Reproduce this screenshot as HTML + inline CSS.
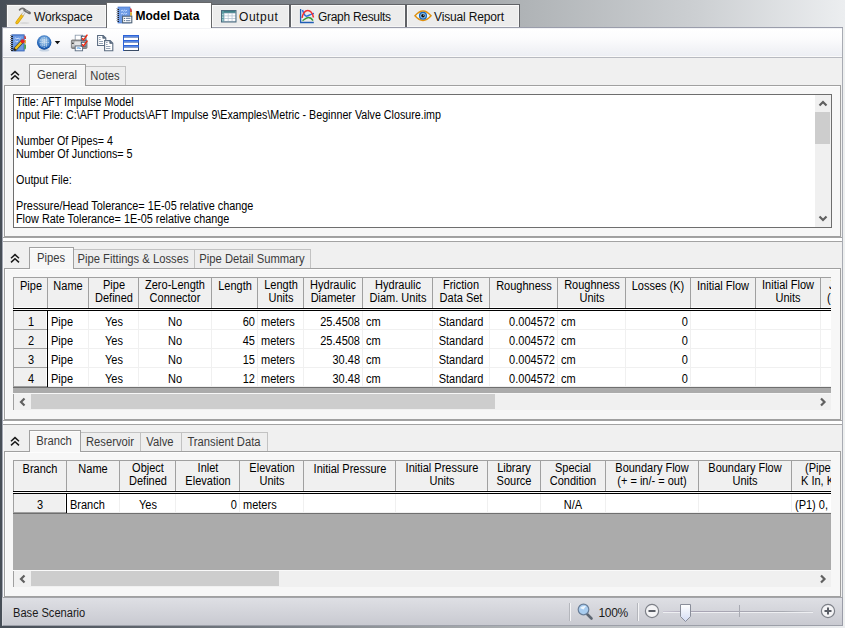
<!DOCTYPE html>
<html><head><meta charset="utf-8">
<style>
*{margin:0;padding:0;box-sizing:border-box}
html,body{width:845px;height:628px;overflow:hidden;background:#f0f0f0;font-family:"Liberation Sans",sans-serif;font-size:11px;color:#000}
.a{position:absolute}
.t{white-space:pre}
svg{position:absolute;overflow:visible}
</style></head><body>
<div class="a" style="left:0px;top:0px;width:845px;height:27px;background:linear-gradient(to right,#474e57 0%,#5a6068 13%,#6e747b 25%,#7e848b 35%,#979b9f 48%,#aeb2b5 61%,#cdd0d3 83%,#eceef0 100%)"></div>
<div class="a" style="left:0px;top:626px;width:845px;height:2px;background:linear-gradient(to right,#474e57 0%,#5a6068 13%,#6e747b 25%,#7e848b 35%,#979b9f 48%,#aeb2b5 61%,#cdd0d3 83%,#eceef0 100%)"></div>
<div class="a" style="left:0px;top:0px;width:2px;height:628px;background:#474e57"></div>
<div class="a" style="left:843px;top:27px;width:2px;height:599px;background:#eef0f0"></div>
<div class="a" style="left:6px;top:4px;width:101px;height:23px;background:#ececec;border:1px solid #606266;border-bottom:none;box-shadow:inset 1px 1px 0 #fafafa,inset -1px -1px 0 #f6f6f6"></div>
<div class="a" style="left:211px;top:4px;width:79px;height:23px;background:#ececec;border:1px solid #606266;border-bottom:none;box-shadow:inset 1px 1px 0 #fafafa,inset -1px -1px 0 #f6f6f6"></div>
<div class="a" style="left:290px;top:4px;width:116px;height:23px;background:#ececec;border:1px solid #606266;border-bottom:none;box-shadow:inset 1px 1px 0 #fafafa,inset -1px -1px 0 #f6f6f6"></div>
<div class="a" style="left:406px;top:4px;width:114px;height:23px;background:#ececec;border:1px solid #606266;border-bottom:none;box-shadow:inset 1px 1px 0 #fafafa,inset -1px -1px 0 #f6f6f6"></div>
<div class="a" style="left:106px;top:2px;width:106px;height:26px;background:#fff;border:1px solid #666769;border-bottom:none;z-index:1"></div>
<div class="a t" style="left:34px;top:10.84px;font-size:12px;line-height:12px;letter-spacing:-0.15px;color:#111">Workspace</div>
<div class="a t" style="left:135.5px;top:9.84px;font-size:12px;line-height:12px;font-weight:bold;z-index:2">Model Data</div>
<div class="a t" style="left:239px;top:10.84px;font-size:12px;line-height:12px;letter-spacing:0.55px;color:#111">Output</div>
<div class="a t" style="left:318px;top:10.84px;font-size:12px;line-height:12px;letter-spacing:-0.3px;color:#111">Graph Results</div>
<div class="a t" style="left:434px;top:10.84px;font-size:12px;line-height:12px;letter-spacing:-0.15px;color:#111">Visual Report</div>
<svg style="left:12px;top:6px;z-index:2" width="20" height="20" viewBox="0 0 20 20">
<ellipse cx="12.5" cy="17" rx="5" ry="0.8" fill="#d2d2d2"/>
<path d="M5 16.6 L10.6 8.9" stroke="#c89200" stroke-width="3.2" stroke-linecap="round"/>
<path d="M5 16.6 L10.6 8.9" stroke="#f2bd18" stroke-width="2.2" stroke-linecap="round"/>
<path d="M10.3 9.3 L13 5.4" stroke="#b8b8b8" stroke-width="2.4"/>
<path d="M10.5 8.8 L12.9 5.5" stroke="#f4f4f4" stroke-width="1.2"/>
<path d="M7.6 3.8 Q10 1.2 13 3.6" stroke="#727272" stroke-width="1.7" fill="none" stroke-linecap="round"/>
<path d="M12.6 4.2 L17.6 7" stroke="#6a6a6a" stroke-width="2.6" stroke-linecap="round"/>
<path d="M13.4 4.2 L16.8 6.1" stroke="#b4b4b4" stroke-width="0.8"/>
</svg>
<svg style="left:115px;top:6px;z-index:2" width="18" height="18" viewBox="0 0 18 18">
<rect x="3" y="1" width="12" height="16" fill="#6c9ae6" stroke="#4a78cc" stroke-width="0.7"/>
<path d="M6 5.2 l1.2 -1 l1.2 1 l1.2 -1 l1.2 1 l1.2 -1 M6 8.2 l1.2 -1 l1.2 1 l1.2 -1 l1.2 1 l1.2 -1" stroke="#d6e6ff" stroke-width="0.9" fill="none"/>
<path d="M1.5 2.5 h1 M1.5 4.5 h1 M1.5 6.5 h1 M1.5 8.5 h1 M1.5 10.5 h1 M1.5 12.5 h1 M1.5 14.5 h1" stroke="#8a8f96" stroke-width="1"/>
<path d="M2.5 3.5 h1.5 M2.5 5.5 h1.5 M2.5 7.5 h1.5 M2.5 9.5 h1.5 M2.5 11.5 h1.5 M2.5 13.5 h1.5 M2.5 15.5 h1.5" stroke="#1e1e1e" stroke-width="1"/>
<path d="M15 2 q2 0 2 2.5 v1.5 h-2 z" fill="#c94848"/><rect x="15" y="6.2" width="2" height="3.6" fill="#e0b440"/>
<rect x="7.6" y="10.2" width="9.2" height="6.6" fill="#fff" stroke="#4f6378" stroke-width="1.1"/>
<path d="M10.8 12.4 h4.6 M10.8 14.6 h4.6" stroke="#8094b0" stroke-width="1.1"/>
<circle cx="9.4" cy="12.4" r="0.6" fill="#4f6378"/><circle cx="9.4" cy="14.6" r="0.6" fill="#4f6378"/>
</svg>
<svg style="left:221px;top:10px;z-index:2" width="16" height="13" viewBox="0 0 16 13">
<rect x="0.5" y="0.5" width="14.5" height="11.5" fill="#b4c3d2" stroke="#4b6b7e" stroke-width="1"/>
<rect x="1" y="1" width="13.5" height="1.8" fill="#3f8088"/>
<rect x="1" y="1" width="1.8" height="10.5" fill="#5a9aa2"/>
<rect x="3.6" y="3.6" width="3.2" height="1.9" fill="#fff"/><rect x="7.5" y="3.6" width="3.2" height="1.9" fill="#fff"/><rect x="11.4" y="3.6" width="2.8" height="1.9" fill="#fff"/>
<rect x="3.6" y="6.3" width="3.2" height="1.9" fill="#fff"/><rect x="7.5" y="6.3" width="3.2" height="1.9" fill="#fff"/><rect x="11.4" y="6.3" width="2.8" height="1.9" fill="#fff"/>
<rect x="3.6" y="9" width="3.2" height="1.9" fill="#fff"/><rect x="7.5" y="9" width="3.2" height="1.9" fill="#fff"/><rect x="11.4" y="9" width="2.8" height="1.9" fill="#fff"/>
<rect x="1.2" y="3.8" width="1.2" height="1.5" fill="#bfe0e2"/><rect x="1.2" y="6.5" width="1.2" height="1.5" fill="#bfe0e2"/><rect x="1.2" y="9.2" width="1.2" height="1.5" fill="#bfe0e2"/>
</svg>
<svg style="left:299px;top:8px;z-index:2" width="16" height="16" viewBox="0 0 16 16">
<path d="M3.5 12.6 C5 12 7 9.5 9.5 9.5 C11.5 9.5 13 11 14 12.6" stroke="#3b9a35" stroke-width="1.5" fill="none"/>
<path d="M3.5 2.1 C4.5 5 5.5 8.2 7.5 8.2 C10 8.2 12 5.5 15 5.5" stroke="#2a6fe0" stroke-width="1.5" fill="none"/>
<path d="M3 9.8 C4 5 6 2.5 8.8 2.5 C11.5 2.5 13.5 5 14.5 9.5" stroke="#f03030" stroke-width="1.5" fill="none"/>
<path d="M1.6 1 V14.5 H14.8" stroke="#1f5db5" stroke-width="1.3" fill="none"/>
</svg>
<svg style="left:414px;top:9px;z-index:2" width="18" height="14" viewBox="0 0 18 14">
<path d="M1 6.8 Q9 -3 17 6.8 Q9 16 1 6.8 Z" fill="#e8f8ff" stroke="#e0900e" stroke-width="1.5"/>
<circle cx="9" cy="6.7" r="3.4" fill="#8fc6ee" stroke="#1e66b8" stroke-width="1.3"/>
<circle cx="9" cy="6.7" r="1.8" fill="#111"/>
<circle cx="9.6" cy="6.1" r="0.6" fill="#cfcfcf"/>
</svg>
<div class="a" style="left:2px;top:27px;width:1px;height:572px;background:#a2a6b2"></div>
<div class="a" style="left:3px;top:28px;width:1px;height:571px;background:#f8f8f8"></div>
<div class="a" style="left:842px;top:27px;width:1px;height:572px;background:#a8abb3"></div>
<div class="a" style="left:3px;top:28px;width:839px;height:29px;background:linear-gradient(#ffffff 0%,#fcfcfd 35%,#f3f4f7 70%,#eceef3 100%)"></div>
<div class="a" style="left:2px;top:27px;width:841px;height:1px;background:#9a9dab"></div>
<div class="a" style="left:107px;top:27px;width:104px;height:1px;background:#ffffff;z-index:1"></div>
<div class="a" style="left:3px;top:28px;width:839px;height:1px;background:#f2f3f6"></div>
<div class="a" style="left:3px;top:56px;width:839px;height:1px;background:#fafafa"></div>
<div class="a" style="left:3px;top:57px;width:839px;height:1px;background:#b8bac0"></div>
<svg style="left:9px;top:34px" width="18" height="18" viewBox="0 0 18 18">
<rect x="2.8" y="0.8" width="12.4" height="16.2" fill="#5b8ad8" stroke="#3a66b8" stroke-width="0.8"/>
<rect x="4" y="2" width="10" height="14" fill="#6d9ae2"/>
<path d="M5.5 5 l1.2 -1 l1.2 1 l1.2 -1 l1.2 1 l1.2 -1 M5.5 8 l1.2 -1 l1.2 1 l1.2 -1" stroke="#d8e6ff" stroke-width="0.9" fill="none"/>
<path d="M2 2.5 h2 M2 4.5 h2 M2 6.5 h2 M2 8.5 h2 M2 10.5 h2 M2 12.5 h2 M2 14.5 h2 M2 16.5 h2" stroke="#1a1a1a" stroke-width="0.9"/>
<path d="M1 1.5 h1.5 M1 3.5 h1.5 M1 5.5 h1.5 M1 7.5 h1.5 M1 9.5 h1.5 M1 11.5 h1.5 M1 13.5 h1.5 M1 15.5 h1.5" stroke="#8a8f96" stroke-width="0.9"/>
<path d="M15.2 1.5 q1.8 0 1.8 2 v1.5 h-1.8 z" fill="#c84040"/><path d="M15.2 6 h1.8 v3.5 h-1.8 z" fill="#dcb040"/><path d="M15.2 10.5 h1.8 v3.5 q0 1.5 -1.8 1.5 z" fill="#50a050"/>
<path d="M6 15.2 L13 7.8" stroke="#3a3a3a" stroke-width="3.8" stroke-linecap="round"/>
<path d="M6.3 14.9 L13 7.8" stroke="#f1c319" stroke-width="2.4"/>
<path d="M4.6 16.6 l1 -2.4 l1.4 1.4 z" fill="#222"/>
<circle cx="13.6" cy="7.2" r="2" fill="#e42222"/>
</svg>
<svg style="left:36px;top:34px" width="26" height="18" viewBox="0 0 26 18">
<defs><radialGradient id="gl" cx="0.5" cy="0.4" r="0.62"><stop offset="0" stop-color="#b9d3ea"/><stop offset="0.45" stop-color="#6aa0d8"/><stop offset="0.8" stop-color="#1e5fb4"/><stop offset="1" stop-color="#0b3a82"/></radialGradient></defs>
<ellipse cx="8.4" cy="16.3" rx="5" ry="1.2" fill="#b4c6dc" opacity="0.7"/>
<circle cx="8.2" cy="8.5" r="7.2" fill="url(#gl)"/>
<path d="M4 6 h8.4 M3.6 8.5 h9.2 M4 11 h8.4 M6 3.5 v10 M8.2 3 v11 M10.4 3.5 v10" stroke="#e8f0f8" stroke-width="0.8" stroke-dasharray="1.2 0.8" fill="none" opacity="0.85"/>
<path d="M18.7 7 h5.5 l-2.75 3.2 z" fill="#111"/>
</svg>
<svg style="left:70px;top:34px" width="19" height="18" viewBox="0 0 19 18">
<defs><linearGradient id="pr" x1="0" y1="0" x2="0" y2="1"><stop offset="0" stop-color="#8c8c8c"/><stop offset="0.35" stop-color="#d6d6d6"/><stop offset="0.7" stop-color="#c8c8c8"/><stop offset="1" stop-color="#7a7a7a"/></linearGradient></defs>
<rect x="5.2" y="1.2" width="7.4" height="6" fill="#fff" stroke="#8797a8" stroke-width="0.8"/>
<rect x="1.4" y="6" width="15.6" height="8.4" rx="0.8" fill="url(#pr)" stroke="#6c6c6c" stroke-width="0.8"/>
<rect x="5" y="7.6" width="6" height="3.4" fill="#e4e4e4"/>
<rect x="2.2" y="8.6" width="1.4" height="1.4" fill="#222"/>
<rect x="5.2" y="12" width="7.4" height="4.8" fill="#fff" stroke="#5a6b80" stroke-width="0.9"/>
<path d="M6.8 14.4 q1.5 -1.2 4 0.4" stroke="#6aaae8" stroke-width="1.2" fill="none"/>
<rect x="11.3" y="2.2" width="4.6" height="4" fill="#fff" stroke="#3d5570" stroke-width="1"/>
<rect x="11.3" y="8.2" width="4.6" height="4" fill="#fff" stroke="#3d5570" stroke-width="1"/>
<path d="M12 4.2 l1.6 1.7 l3.8 -5.2 M12 10.2 l1.6 1.7 l3.8 -5.2" stroke="#ee2a10" stroke-width="1.4" fill="none"/>
</svg>
<svg style="left:96px;top:34px" width="18" height="18" viewBox="0 0 18 18">
<path d="M1.6 1.5 h5.6 l2.6 2.6 v7.4 h-8.2 z" fill="#fff" stroke="#5a6b80" stroke-width="1.1"/>
<path d="M6.8 1.5 v2.8 h3" fill="#5a6b80" stroke="#5a6b80" stroke-width="0.8"/>
<path d="M3 3.5 h1.6 M3 5.5 h1.6 M3 7.5 h4 M3 9.5 h4" stroke="#8a9ab0" stroke-width="0.9"/>
<path d="M8.6 6.6 h5.6 l2.6 2.6 v7.6 h-8.2 z" fill="#fff" stroke="#5a6b80" stroke-width="1.1"/>
<path d="M13.8 6.6 v2.8 h3" fill="#5a6b80" stroke="#5a6b80" stroke-width="0.8"/>
<path d="M10 8.5 h1.6 M10 10.5 h1.6 M10 12.5 h4.4 M10 14.5 h4.4" stroke="#8a9ab0" stroke-width="0.9"/>
</svg>
<svg style="left:123px;top:35px" width="16" height="16" viewBox="0 0 16 16">
<rect x="0" y="0" width="16" height="16" fill="#3a4c66"/>
<rect x="0" y="0" width="16" height="2.6" fill="#2d63d8"/>
<rect x="0" y="5" width="16" height="2.6" fill="#2d63d8"/>
<rect x="0" y="10" width="16" height="2.6" fill="#2d63d8"/>
<rect x="1" y="1" width="14" height="0.7" fill="#6f9be8"/>
<rect x="1" y="6" width="14" height="0.7" fill="#6f9be8"/>
<rect x="1" y="11" width="14" height="0.7" fill="#6f9be8"/>
<rect x="1" y="2.6" width="14" height="2.4" fill="#fff"/>
<rect x="1" y="7.6" width="14" height="2.4" fill="#fff"/>
<rect x="1" y="12.6" width="14" height="2.4" fill="#fff"/>
<rect x="0" y="2.6" width="1" height="13.4" fill="#2d63d8"/>
</svg>
<svg style="left:10px;top:71px" width="10" height="10" viewBox="0 0 10 10">
<path d="M1 4.2 L5 0.6 L9 4.2 M1 8.4 L5 4.8 L9 8.4" stroke="#1a1a1a" stroke-width="1.5" fill="none"/>
</svg>
<div class="a" style="left:4px;top:85px;width:837px;height:152px;background:#f7f7f7;border:1px solid #a0a0a0"></div>
<div class="a" style="left:5px;top:86px;width:835px;height:1px;background:#fdfdfd"></div>
<div class="a" style="left:5px;top:86px;width:1px;height:150px;background:#fdfdfd"></div>
<div class="a" style="left:85px;top:66px;width:41px;height:19px;background:#eeeeee;border:1px solid #c2c2c2;border-bottom:none"></div>
<div class="a t" style="left:-45.50px;width:300px;text-align:center;top:69.84px;font-size:12px;line-height:12px;transform:scaleX(0.935);transform-origin:center 0;color:#3b3b3b">Notes</div>
<div class="a" style="left:29px;top:64px;width:57px;height:22px;background:#f7f7f7;border:1px solid #a0a0a0;border-bottom:none;z-index:1"></div>
<div class="a" style="left:30px;top:65px;width:55px;height:1px;background:#fdfdfd;z-index:1"></div>
<div class="a t" style="left:-93.50px;width:300px;text-align:center;top:68.84px;font-size:12px;line-height:12px;transform:scaleX(0.935);transform-origin:center 0;color:#3b3b3b;z-index:2">General</div>
<div class="a" style="left:3px;top:237px;width:839px;height:1px;background:#a3a3a3"></div>
<div class="a" style="left:3px;top:238px;width:839px;height:3px;background:#ffffff"></div>
<div class="a" style="left:3px;top:241px;width:839px;height:1px;background:#a3a3a3"></div>
<div class="a" style="left:13px;top:94px;width:819px;height:134px;background:#fff;border:1px solid #6e6e6e"></div>
<div class="a t" style="left:16px;top:95.84px;font-size:12px;line-height:12px;transform:scaleX(0.89);transform-origin:left 0;">Title: AFT Impulse Model</div>
<div class="a t" style="left:16px;top:108.84px;font-size:12px;line-height:12px;transform:scaleX(0.8925);transform-origin:left 0;">Input File: C:\AFT Products\AFT Impulse 9\Examples\Metric - Beginner Valve Closure.imp</div>
<div class="a t" style="left:16px;top:134.84px;font-size:12px;line-height:12px;transform:scaleX(0.889);transform-origin:left 0;">Number Of Pipes= 4</div>
<div class="a t" style="left:16px;top:147.84px;font-size:12px;line-height:12px;transform:scaleX(0.899);transform-origin:left 0;">Number Of Junctions= 5</div>
<div class="a t" style="left:16px;top:173.84px;font-size:12px;line-height:12px;transform:scaleX(0.898);transform-origin:left 0;">Output File:</div>
<div class="a t" style="left:16px;top:199.84px;font-size:12px;line-height:12px;transform:scaleX(0.905);transform-origin:left 0;">Pressure/Head Tolerance= 1E-05 relative change</div>
<div class="a t" style="left:16px;top:212.84px;font-size:12px;line-height:12px;transform:scaleX(0.903);transform-origin:left 0;">Flow Rate Tolerance= 1E-05 relative change</div>
<div class="a" style="left:815px;top:95px;width:16px;height:132px;background:#f0f0f0"></div>
<div class="a" style="left:815px;top:112px;width:15px;height:32px;background:#cdcdcd"></div>
<svg style="left:815px;top:95px" width="16" height="132" viewBox="0 0 16 132">
<path d="M4.5 10.5 L8 7 L11.5 10.5" stroke="#606060" stroke-width="2.2" fill="none"/>
<path d="M4.5 121.5 L8 125 L11.5 121.5" stroke="#606060" stroke-width="2.2" fill="none"/>
</svg>
<svg style="left:10px;top:254px" width="10" height="10" viewBox="0 0 10 10">
<path d="M1 4.2 L5 0.6 L9 4.2 M1 8.4 L5 4.8 L9 8.4" stroke="#1a1a1a" stroke-width="1.5" fill="none"/>
</svg>
<div class="a" style="left:4px;top:268px;width:837px;height:152px;background:#f7f7f7;border:1px solid #a0a0a0"></div>
<div class="a" style="left:5px;top:269px;width:835px;height:1px;background:#fdfdfd"></div>
<div class="a" style="left:5px;top:269px;width:1px;height:150px;background:#fdfdfd"></div>
<div class="a" style="left:73px;top:249px;width:122px;height:19px;background:#eeeeee;border:1px solid #c2c2c2;border-bottom:none"></div>
<div class="a t" style="left:-17.00px;width:300px;text-align:center;top:252.84px;font-size:12px;line-height:12px;transform:scaleX(0.935);transform-origin:center 0;color:#3b3b3b">Pipe Fittings &amp; Losses</div>
<div class="a" style="left:194px;top:249px;width:117px;height:19px;background:#eeeeee;border:1px solid #c2c2c2;border-bottom:none"></div>
<div class="a t" style="left:101.50px;width:300px;text-align:center;top:252.84px;font-size:12px;line-height:12px;transform:scaleX(0.935);transform-origin:center 0;color:#3b3b3b">Pipe Detail Summary</div>
<div class="a" style="left:29px;top:247px;width:45px;height:22px;background:#f7f7f7;border:1px solid #a0a0a0;border-bottom:none;z-index:1"></div>
<div class="a" style="left:30px;top:248px;width:43px;height:1px;background:#fdfdfd;z-index:1"></div>
<div class="a t" style="left:-99.50px;width:300px;text-align:center;top:251.84px;font-size:12px;line-height:12px;transform:scaleX(0.935);transform-origin:center 0;color:#3b3b3b;z-index:2">Pipes</div>
<div class="a" style="left:3px;top:420px;width:839px;height:1px;background:#a3a3a3"></div>
<div class="a" style="left:3px;top:421px;width:839px;height:3px;background:#ffffff"></div>
<div class="a" style="left:3px;top:424px;width:839px;height:1px;background:#a3a3a3"></div>
<div class="a" style="left:0;top:0;width:831px;height:628px;overflow:hidden">
<div class="a" style="left:13px;top:277px;width:818px;height:31px;background:#f0f0f0;border-top:1px solid #a0a0a0;border-left:1px solid #a0a0a0"></div>
<div class="a" style="left:14px;top:307px;width:817px;height:1px;background:#fcfcfc"></div>
<div class="a" style="left:13px;top:308px;width:818px;height:1px;background:#000"></div>
<div class="a" style="left:13px;top:309px;width:818px;height:1px;background:#fafafa"></div>
<div class="a" style="left:13px;top:310px;width:818px;height:1px;background:#000"></div>
<div class="a" style="left:47px;top:278px;width:1px;height:30px;background:#a0a0a0"></div>
<div class="a" style="left:88px;top:278px;width:1px;height:30px;background:#a0a0a0"></div>
<div class="a" style="left:138px;top:278px;width:1px;height:30px;background:#a0a0a0"></div>
<div class="a" style="left:211px;top:278px;width:1px;height:30px;background:#a0a0a0"></div>
<div class="a" style="left:257px;top:278px;width:1px;height:30px;background:#a0a0a0"></div>
<div class="a" style="left:303px;top:278px;width:1px;height:30px;background:#a0a0a0"></div>
<div class="a" style="left:362px;top:278px;width:1px;height:30px;background:#a0a0a0"></div>
<div class="a" style="left:432px;top:278px;width:1px;height:30px;background:#a0a0a0"></div>
<div class="a" style="left:489px;top:278px;width:1px;height:30px;background:#a0a0a0"></div>
<div class="a" style="left:557px;top:278px;width:1px;height:30px;background:#a0a0a0"></div>
<div class="a" style="left:625px;top:278px;width:1px;height:30px;background:#a0a0a0"></div>
<div class="a" style="left:690px;top:278px;width:1px;height:30px;background:#a0a0a0"></div>
<div class="a" style="left:755px;top:278px;width:1px;height:30px;background:#a0a0a0"></div>
<div class="a" style="left:820px;top:278px;width:1px;height:30px;background:#a0a0a0"></div>
<div class="a t" style="left:-119.50px;width:300px;text-align:center;top:279.84px;font-size:12px;line-height:12px;transform:scaleX(0.917);transform-origin:center 0;color:#000">Pipe</div>
<div class="a t" style="left:-82.00px;width:300px;text-align:center;top:279.84px;font-size:12px;line-height:12px;transform:scaleX(0.917);transform-origin:center 0;color:#000">Name</div>
<div class="a t" style="left:-36.50px;width:300px;text-align:center;top:278.84px;font-size:12px;line-height:12px;transform:scaleX(0.917);transform-origin:center 0;color:#000">Pipe</div>
<div class="a t" style="left:-36.50px;width:300px;text-align:center;top:291.84px;font-size:12px;line-height:12px;transform:scaleX(0.917);transform-origin:center 0;color:#000">Defined</div>
<div class="a t" style="left:25.00px;width:300px;text-align:center;top:278.84px;font-size:12px;line-height:12px;transform:scaleX(0.917);transform-origin:center 0;color:#000">Zero-Length</div>
<div class="a t" style="left:25.00px;width:300px;text-align:center;top:291.84px;font-size:12px;line-height:12px;transform:scaleX(0.917);transform-origin:center 0;color:#000">Connector</div>
<div class="a t" style="left:84.50px;width:300px;text-align:center;top:279.84px;font-size:12px;line-height:12px;transform:scaleX(0.917);transform-origin:center 0;color:#000">Length</div>
<div class="a t" style="left:130.50px;width:300px;text-align:center;top:278.84px;font-size:12px;line-height:12px;transform:scaleX(0.917);transform-origin:center 0;color:#000">Length</div>
<div class="a t" style="left:130.50px;width:300px;text-align:center;top:291.84px;font-size:12px;line-height:12px;transform:scaleX(0.917);transform-origin:center 0;color:#000">Units</div>
<div class="a t" style="left:183.00px;width:300px;text-align:center;top:278.84px;font-size:12px;line-height:12px;transform:scaleX(0.917);transform-origin:center 0;color:#000">Hydraulic</div>
<div class="a t" style="left:183.00px;width:300px;text-align:center;top:291.84px;font-size:12px;line-height:12px;transform:scaleX(0.917);transform-origin:center 0;color:#000">Diameter</div>
<div class="a t" style="left:247.50px;width:300px;text-align:center;top:278.84px;font-size:12px;line-height:12px;transform:scaleX(0.917);transform-origin:center 0;color:#000">Hydraulic</div>
<div class="a t" style="left:247.50px;width:300px;text-align:center;top:291.84px;font-size:12px;line-height:12px;transform:scaleX(0.917);transform-origin:center 0;color:#000">Diam. Units</div>
<div class="a t" style="left:311.00px;width:300px;text-align:center;top:278.84px;font-size:12px;line-height:12px;transform:scaleX(0.917);transform-origin:center 0;color:#000">Friction</div>
<div class="a t" style="left:311.00px;width:300px;text-align:center;top:291.84px;font-size:12px;line-height:12px;transform:scaleX(0.917);transform-origin:center 0;color:#000">Data Set</div>
<div class="a t" style="left:373.50px;width:300px;text-align:center;top:279.84px;font-size:12px;line-height:12px;transform:scaleX(0.917);transform-origin:center 0;color:#000">Roughness</div>
<div class="a t" style="left:441.50px;width:300px;text-align:center;top:278.84px;font-size:12px;line-height:12px;transform:scaleX(0.917);transform-origin:center 0;color:#000">Roughness</div>
<div class="a t" style="left:441.50px;width:300px;text-align:center;top:291.84px;font-size:12px;line-height:12px;transform:scaleX(0.917);transform-origin:center 0;color:#000">Units</div>
<div class="a t" style="left:508.00px;width:300px;text-align:center;top:279.84px;font-size:12px;line-height:12px;transform:scaleX(0.917);transform-origin:center 0;color:#000">Losses (K)</div>
<div class="a t" style="left:573.00px;width:300px;text-align:center;top:279.84px;font-size:12px;line-height:12px;transform:scaleX(0.917);transform-origin:center 0;color:#000">Initial Flow</div>
<div class="a t" style="left:638.00px;width:300px;text-align:center;top:278.84px;font-size:12px;line-height:12px;transform:scaleX(0.917);transform-origin:center 0;color:#000">Initial Flow</div>
<div class="a t" style="left:638.00px;width:300px;text-align:center;top:291.84px;font-size:12px;line-height:12px;transform:scaleX(0.917);transform-origin:center 0;color:#000">Units</div>
<div class="a t" style="left:828.5px;top:278.84px;font-size:12px;line-height:12px;transform:scaleX(0.917);transform-origin:left 0;color:#000">J</div>
<div class="a t" style="left:826.5px;top:291.84px;font-size:12px;line-height:12px;transform:scaleX(0.917);transform-origin:left 0;color:#000">(</div>
<div class="a" style="left:13px;top:311px;width:34px;height:19px;background:#f0f0f0;border-left:1px solid #a0a0a0"></div>
<div class="a" style="left:46px;top:311px;width:1px;height:18px;background:#fdfdfd"></div>
<div class="a" style="left:13px;top:329px;width:34px;height:1px;background:#a0a0a0"></div>
<div class="a" style="left:48px;top:311px;width:783px;height:19px;background:#fff"></div>
<div class="a" style="left:48px;top:329px;width:783px;height:1px;background:#f0f0f0"></div>
<div class="a" style="left:88px;top:311px;width:1px;height:19px;background:#f0f0f0"></div>
<div class="a" style="left:138px;top:311px;width:1px;height:19px;background:#f0f0f0"></div>
<div class="a" style="left:211px;top:311px;width:1px;height:19px;background:#f0f0f0"></div>
<div class="a" style="left:257px;top:311px;width:1px;height:19px;background:#f0f0f0"></div>
<div class="a" style="left:303px;top:311px;width:1px;height:19px;background:#f0f0f0"></div>
<div class="a" style="left:362px;top:311px;width:1px;height:19px;background:#f0f0f0"></div>
<div class="a" style="left:432px;top:311px;width:1px;height:19px;background:#f0f0f0"></div>
<div class="a" style="left:489px;top:311px;width:1px;height:19px;background:#f0f0f0"></div>
<div class="a" style="left:557px;top:311px;width:1px;height:19px;background:#f0f0f0"></div>
<div class="a" style="left:625px;top:311px;width:1px;height:19px;background:#f0f0f0"></div>
<div class="a" style="left:690px;top:311px;width:1px;height:19px;background:#f0f0f0"></div>
<div class="a" style="left:755px;top:311px;width:1px;height:19px;background:#f0f0f0"></div>
<div class="a" style="left:820px;top:311px;width:1px;height:19px;background:#f0f0f0"></div>
<div class="a" style="left:47px;top:311px;width:1px;height:19px;background:#000"></div>
<div class="a t" style="left:-119.50px;width:300px;text-align:center;top:315.84px;font-size:12px;line-height:12px;transform:scaleX(0.917);transform-origin:center 0;">1</div>
<div class="a t" style="left:51px;top:315.84px;font-size:12px;line-height:12px;transform:scaleX(0.917);transform-origin:left 0;">Pipe</div>
<div class="a t" style="left:-36.50px;width:300px;text-align:center;top:315.84px;font-size:12px;line-height:12px;transform:scaleX(0.917);transform-origin:center 0;">Yes</div>
<div class="a t" style="left:25.00px;width:300px;text-align:center;top:315.84px;font-size:12px;line-height:12px;transform:scaleX(0.917);transform-origin:center 0;">No</div>
<div class="a t" style="left:-45px;width:300px;text-align:right;top:315.84px;font-size:12px;line-height:12px;transform:scaleX(0.917);transform-origin:right 0;">60</div>
<div class="a t" style="left:261px;top:315.84px;font-size:12px;line-height:12px;transform:scaleX(0.917);transform-origin:left 0;">meters</div>
<div class="a t" style="left:60px;width:300px;text-align:right;top:315.84px;font-size:12px;line-height:12px;transform:scaleX(0.917);transform-origin:right 0;">25.4508</div>
<div class="a t" style="left:366px;top:315.84px;font-size:12px;line-height:12px;transform:scaleX(0.917);transform-origin:left 0;">cm</div>
<div class="a t" style="left:311.00px;width:300px;text-align:center;top:315.84px;font-size:12px;line-height:12px;transform:scaleX(0.917);transform-origin:center 0;">Standard</div>
<div class="a t" style="left:255px;width:300px;text-align:right;top:315.84px;font-size:12px;line-height:12px;transform:scaleX(0.917);transform-origin:right 0;">0.004572</div>
<div class="a t" style="left:561px;top:315.84px;font-size:12px;line-height:12px;transform:scaleX(0.917);transform-origin:left 0;">cm</div>
<div class="a t" style="left:388px;width:300px;text-align:right;top:315.84px;font-size:12px;line-height:12px;transform:scaleX(0.917);transform-origin:right 0;">0</div>
<div class="a" style="left:13px;top:330px;width:34px;height:19px;background:#f0f0f0;border-left:1px solid #a0a0a0"></div>
<div class="a" style="left:46px;top:330px;width:1px;height:18px;background:#fdfdfd"></div>
<div class="a" style="left:13px;top:348px;width:34px;height:1px;background:#a0a0a0"></div>
<div class="a" style="left:48px;top:330px;width:783px;height:19px;background:#fff"></div>
<div class="a" style="left:48px;top:348px;width:783px;height:1px;background:#f0f0f0"></div>
<div class="a" style="left:88px;top:330px;width:1px;height:19px;background:#f0f0f0"></div>
<div class="a" style="left:138px;top:330px;width:1px;height:19px;background:#f0f0f0"></div>
<div class="a" style="left:211px;top:330px;width:1px;height:19px;background:#f0f0f0"></div>
<div class="a" style="left:257px;top:330px;width:1px;height:19px;background:#f0f0f0"></div>
<div class="a" style="left:303px;top:330px;width:1px;height:19px;background:#f0f0f0"></div>
<div class="a" style="left:362px;top:330px;width:1px;height:19px;background:#f0f0f0"></div>
<div class="a" style="left:432px;top:330px;width:1px;height:19px;background:#f0f0f0"></div>
<div class="a" style="left:489px;top:330px;width:1px;height:19px;background:#f0f0f0"></div>
<div class="a" style="left:557px;top:330px;width:1px;height:19px;background:#f0f0f0"></div>
<div class="a" style="left:625px;top:330px;width:1px;height:19px;background:#f0f0f0"></div>
<div class="a" style="left:690px;top:330px;width:1px;height:19px;background:#f0f0f0"></div>
<div class="a" style="left:755px;top:330px;width:1px;height:19px;background:#f0f0f0"></div>
<div class="a" style="left:820px;top:330px;width:1px;height:19px;background:#f0f0f0"></div>
<div class="a" style="left:47px;top:330px;width:1px;height:19px;background:#000"></div>
<div class="a t" style="left:-119.50px;width:300px;text-align:center;top:334.84px;font-size:12px;line-height:12px;transform:scaleX(0.917);transform-origin:center 0;">2</div>
<div class="a t" style="left:51px;top:334.84px;font-size:12px;line-height:12px;transform:scaleX(0.917);transform-origin:left 0;">Pipe</div>
<div class="a t" style="left:-36.50px;width:300px;text-align:center;top:334.84px;font-size:12px;line-height:12px;transform:scaleX(0.917);transform-origin:center 0;">Yes</div>
<div class="a t" style="left:25.00px;width:300px;text-align:center;top:334.84px;font-size:12px;line-height:12px;transform:scaleX(0.917);transform-origin:center 0;">No</div>
<div class="a t" style="left:-45px;width:300px;text-align:right;top:334.84px;font-size:12px;line-height:12px;transform:scaleX(0.917);transform-origin:right 0;">45</div>
<div class="a t" style="left:261px;top:334.84px;font-size:12px;line-height:12px;transform:scaleX(0.917);transform-origin:left 0;">meters</div>
<div class="a t" style="left:60px;width:300px;text-align:right;top:334.84px;font-size:12px;line-height:12px;transform:scaleX(0.917);transform-origin:right 0;">25.4508</div>
<div class="a t" style="left:366px;top:334.84px;font-size:12px;line-height:12px;transform:scaleX(0.917);transform-origin:left 0;">cm</div>
<div class="a t" style="left:311.00px;width:300px;text-align:center;top:334.84px;font-size:12px;line-height:12px;transform:scaleX(0.917);transform-origin:center 0;">Standard</div>
<div class="a t" style="left:255px;width:300px;text-align:right;top:334.84px;font-size:12px;line-height:12px;transform:scaleX(0.917);transform-origin:right 0;">0.004572</div>
<div class="a t" style="left:561px;top:334.84px;font-size:12px;line-height:12px;transform:scaleX(0.917);transform-origin:left 0;">cm</div>
<div class="a t" style="left:388px;width:300px;text-align:right;top:334.84px;font-size:12px;line-height:12px;transform:scaleX(0.917);transform-origin:right 0;">0</div>
<div class="a" style="left:13px;top:349px;width:34px;height:19px;background:#f0f0f0;border-left:1px solid #a0a0a0"></div>
<div class="a" style="left:46px;top:349px;width:1px;height:18px;background:#fdfdfd"></div>
<div class="a" style="left:13px;top:367px;width:34px;height:1px;background:#a0a0a0"></div>
<div class="a" style="left:48px;top:349px;width:783px;height:19px;background:#fff"></div>
<div class="a" style="left:48px;top:367px;width:783px;height:1px;background:#f0f0f0"></div>
<div class="a" style="left:88px;top:349px;width:1px;height:19px;background:#f0f0f0"></div>
<div class="a" style="left:138px;top:349px;width:1px;height:19px;background:#f0f0f0"></div>
<div class="a" style="left:211px;top:349px;width:1px;height:19px;background:#f0f0f0"></div>
<div class="a" style="left:257px;top:349px;width:1px;height:19px;background:#f0f0f0"></div>
<div class="a" style="left:303px;top:349px;width:1px;height:19px;background:#f0f0f0"></div>
<div class="a" style="left:362px;top:349px;width:1px;height:19px;background:#f0f0f0"></div>
<div class="a" style="left:432px;top:349px;width:1px;height:19px;background:#f0f0f0"></div>
<div class="a" style="left:489px;top:349px;width:1px;height:19px;background:#f0f0f0"></div>
<div class="a" style="left:557px;top:349px;width:1px;height:19px;background:#f0f0f0"></div>
<div class="a" style="left:625px;top:349px;width:1px;height:19px;background:#f0f0f0"></div>
<div class="a" style="left:690px;top:349px;width:1px;height:19px;background:#f0f0f0"></div>
<div class="a" style="left:755px;top:349px;width:1px;height:19px;background:#f0f0f0"></div>
<div class="a" style="left:820px;top:349px;width:1px;height:19px;background:#f0f0f0"></div>
<div class="a" style="left:47px;top:349px;width:1px;height:19px;background:#000"></div>
<div class="a t" style="left:-119.50px;width:300px;text-align:center;top:353.84px;font-size:12px;line-height:12px;transform:scaleX(0.917);transform-origin:center 0;">3</div>
<div class="a t" style="left:51px;top:353.84px;font-size:12px;line-height:12px;transform:scaleX(0.917);transform-origin:left 0;">Pipe</div>
<div class="a t" style="left:-36.50px;width:300px;text-align:center;top:353.84px;font-size:12px;line-height:12px;transform:scaleX(0.917);transform-origin:center 0;">Yes</div>
<div class="a t" style="left:25.00px;width:300px;text-align:center;top:353.84px;font-size:12px;line-height:12px;transform:scaleX(0.917);transform-origin:center 0;">No</div>
<div class="a t" style="left:-45px;width:300px;text-align:right;top:353.84px;font-size:12px;line-height:12px;transform:scaleX(0.917);transform-origin:right 0;">15</div>
<div class="a t" style="left:261px;top:353.84px;font-size:12px;line-height:12px;transform:scaleX(0.917);transform-origin:left 0;">meters</div>
<div class="a t" style="left:60px;width:300px;text-align:right;top:353.84px;font-size:12px;line-height:12px;transform:scaleX(0.917);transform-origin:right 0;">30.48</div>
<div class="a t" style="left:366px;top:353.84px;font-size:12px;line-height:12px;transform:scaleX(0.917);transform-origin:left 0;">cm</div>
<div class="a t" style="left:311.00px;width:300px;text-align:center;top:353.84px;font-size:12px;line-height:12px;transform:scaleX(0.917);transform-origin:center 0;">Standard</div>
<div class="a t" style="left:255px;width:300px;text-align:right;top:353.84px;font-size:12px;line-height:12px;transform:scaleX(0.917);transform-origin:right 0;">0.004572</div>
<div class="a t" style="left:561px;top:353.84px;font-size:12px;line-height:12px;transform:scaleX(0.917);transform-origin:left 0;">cm</div>
<div class="a t" style="left:388px;width:300px;text-align:right;top:353.84px;font-size:12px;line-height:12px;transform:scaleX(0.917);transform-origin:right 0;">0</div>
<div class="a" style="left:13px;top:368px;width:34px;height:19px;background:#f0f0f0;border-left:1px solid #a0a0a0"></div>
<div class="a" style="left:46px;top:368px;width:1px;height:18px;background:#fdfdfd"></div>
<div class="a" style="left:13px;top:386px;width:34px;height:1px;background:#a0a0a0"></div>
<div class="a" style="left:48px;top:368px;width:783px;height:19px;background:#fff"></div>
<div class="a" style="left:48px;top:386px;width:783px;height:1px;background:#f0f0f0"></div>
<div class="a" style="left:88px;top:368px;width:1px;height:19px;background:#f0f0f0"></div>
<div class="a" style="left:138px;top:368px;width:1px;height:19px;background:#f0f0f0"></div>
<div class="a" style="left:211px;top:368px;width:1px;height:19px;background:#f0f0f0"></div>
<div class="a" style="left:257px;top:368px;width:1px;height:19px;background:#f0f0f0"></div>
<div class="a" style="left:303px;top:368px;width:1px;height:19px;background:#f0f0f0"></div>
<div class="a" style="left:362px;top:368px;width:1px;height:19px;background:#f0f0f0"></div>
<div class="a" style="left:432px;top:368px;width:1px;height:19px;background:#f0f0f0"></div>
<div class="a" style="left:489px;top:368px;width:1px;height:19px;background:#f0f0f0"></div>
<div class="a" style="left:557px;top:368px;width:1px;height:19px;background:#f0f0f0"></div>
<div class="a" style="left:625px;top:368px;width:1px;height:19px;background:#f0f0f0"></div>
<div class="a" style="left:690px;top:368px;width:1px;height:19px;background:#f0f0f0"></div>
<div class="a" style="left:755px;top:368px;width:1px;height:19px;background:#f0f0f0"></div>
<div class="a" style="left:820px;top:368px;width:1px;height:19px;background:#f0f0f0"></div>
<div class="a" style="left:47px;top:368px;width:1px;height:19px;background:#000"></div>
<div class="a t" style="left:-119.50px;width:300px;text-align:center;top:372.84px;font-size:12px;line-height:12px;transform:scaleX(0.917);transform-origin:center 0;">4</div>
<div class="a t" style="left:51px;top:372.84px;font-size:12px;line-height:12px;transform:scaleX(0.917);transform-origin:left 0;">Pipe</div>
<div class="a t" style="left:-36.50px;width:300px;text-align:center;top:372.84px;font-size:12px;line-height:12px;transform:scaleX(0.917);transform-origin:center 0;">Yes</div>
<div class="a t" style="left:25.00px;width:300px;text-align:center;top:372.84px;font-size:12px;line-height:12px;transform:scaleX(0.917);transform-origin:center 0;">No</div>
<div class="a t" style="left:-45px;width:300px;text-align:right;top:372.84px;font-size:12px;line-height:12px;transform:scaleX(0.917);transform-origin:right 0;">12</div>
<div class="a t" style="left:261px;top:372.84px;font-size:12px;line-height:12px;transform:scaleX(0.917);transform-origin:left 0;">meters</div>
<div class="a t" style="left:60px;width:300px;text-align:right;top:372.84px;font-size:12px;line-height:12px;transform:scaleX(0.917);transform-origin:right 0;">30.48</div>
<div class="a t" style="left:366px;top:372.84px;font-size:12px;line-height:12px;transform:scaleX(0.917);transform-origin:left 0;">cm</div>
<div class="a t" style="left:311.00px;width:300px;text-align:center;top:372.84px;font-size:12px;line-height:12px;transform:scaleX(0.917);transform-origin:center 0;">Standard</div>
<div class="a t" style="left:255px;width:300px;text-align:right;top:372.84px;font-size:12px;line-height:12px;transform:scaleX(0.917);transform-origin:right 0;">0.004572</div>
<div class="a t" style="left:561px;top:372.84px;font-size:12px;line-height:12px;transform:scaleX(0.917);transform-origin:left 0;">cm</div>
<div class="a t" style="left:388px;width:300px;text-align:right;top:372.84px;font-size:12px;line-height:12px;transform:scaleX(0.917);transform-origin:right 0;">0</div>
</div>
<div class="a" style="left:13px;top:387px;width:818px;height:1px;background:#6f6f6f"></div>
<div class="a" style="left:13px;top:388px;width:818px;height:5px;background:#ababab"></div>
<div class="a" style="left:13px;top:393px;width:818px;height:1px;background:#f7f7f7"></div>
<div class="a" style="left:13px;top:394px;width:1px;height:16px;background:#a0a0a0"></div>
<div class="a" style="left:14px;top:394px;width:817px;height:16px;background:#f0f0f0"></div>
<div class="a" style="left:31px;top:394px;width:464px;height:15px;background:#cdcdcd"></div>
<svg style="left:14px;top:394px" width="817" height="16" viewBox="0 0 817 16">
<path d="M10.5 4.5 L7 8 L10.5 11.5" stroke="#606060" stroke-width="2.2" fill="none"/>
<path d="M807 4.5 L810.5 8 L807 11.5" stroke="#606060" stroke-width="2.2" fill="none"/>
</svg>
<svg style="left:10px;top:437px" width="10" height="10" viewBox="0 0 10 10">
<path d="M1 4.2 L5 0.6 L9 4.2 M1 8.4 L5 4.8 L9 8.4" stroke="#1a1a1a" stroke-width="1.5" fill="none"/>
</svg>
<div class="a" style="left:4px;top:451px;width:837px;height:146px;background:#f7f7f7;border:1px solid #a0a0a0"></div>
<div class="a" style="left:5px;top:452px;width:835px;height:1px;background:#fdfdfd"></div>
<div class="a" style="left:5px;top:452px;width:1px;height:144px;background:#fdfdfd"></div>
<div class="a" style="left:80px;top:432px;width:61px;height:19px;background:#eeeeee;border:1px solid #c2c2c2;border-bottom:none"></div>
<div class="a t" style="left:-40.50px;width:300px;text-align:center;top:435.84px;font-size:12px;line-height:12px;transform:scaleX(0.935);transform-origin:center 0;color:#3b3b3b">Reservoir</div>
<div class="a" style="left:140px;top:432px;width:42px;height:19px;background:#eeeeee;border:1px solid #c2c2c2;border-bottom:none"></div>
<div class="a t" style="left:10.00px;width:300px;text-align:center;top:435.84px;font-size:12px;line-height:12px;transform:scaleX(0.935);transform-origin:center 0;color:#3b3b3b">Valve</div>
<div class="a" style="left:181px;top:432px;width:87px;height:19px;background:#eeeeee;border:1px solid #c2c2c2;border-bottom:none"></div>
<div class="a t" style="left:73.50px;width:300px;text-align:center;top:435.84px;font-size:12px;line-height:12px;transform:scaleX(0.935);transform-origin:center 0;color:#3b3b3b">Transient Data</div>
<div class="a" style="left:29px;top:430px;width:52px;height:22px;background:#f7f7f7;border:1px solid #a0a0a0;border-bottom:none;z-index:1"></div>
<div class="a" style="left:30px;top:431px;width:50px;height:1px;background:#fdfdfd;z-index:1"></div>
<div class="a t" style="left:-96.00px;width:300px;text-align:center;top:434.84px;font-size:12px;line-height:12px;transform:scaleX(0.935);transform-origin:center 0;color:#3b3b3b;z-index:2">Branch</div>
<div class="a" style="left:0;top:0;width:831px;height:628px;overflow:hidden">
<div class="a" style="left:13px;top:460px;width:818px;height:31px;background:#f0f0f0;border-top:1px solid #a0a0a0;border-left:1px solid #a0a0a0"></div>
<div class="a" style="left:14px;top:490px;width:817px;height:1px;background:#fcfcfc"></div>
<div class="a" style="left:13px;top:491px;width:818px;height:1px;background:#000"></div>
<div class="a" style="left:13px;top:492px;width:818px;height:1px;background:#fafafa"></div>
<div class="a" style="left:13px;top:493px;width:818px;height:1px;background:#000"></div>
<div class="a" style="left:66px;top:461px;width:1px;height:30px;background:#a0a0a0"></div>
<div class="a" style="left:119px;top:461px;width:1px;height:30px;background:#a0a0a0"></div>
<div class="a" style="left:175px;top:461px;width:1px;height:30px;background:#a0a0a0"></div>
<div class="a" style="left:239px;top:461px;width:1px;height:30px;background:#a0a0a0"></div>
<div class="a" style="left:303px;top:461px;width:1px;height:30px;background:#a0a0a0"></div>
<div class="a" style="left:395px;top:461px;width:1px;height:30px;background:#a0a0a0"></div>
<div class="a" style="left:487px;top:461px;width:1px;height:30px;background:#a0a0a0"></div>
<div class="a" style="left:540px;top:461px;width:1px;height:30px;background:#a0a0a0"></div>
<div class="a" style="left:605px;top:461px;width:1px;height:30px;background:#a0a0a0"></div>
<div class="a" style="left:698px;top:461px;width:1px;height:30px;background:#a0a0a0"></div>
<div class="a" style="left:791px;top:461px;width:1px;height:30px;background:#a0a0a0"></div>
<div class="a t" style="left:-110.00px;width:300px;text-align:center;top:462.84px;font-size:12px;line-height:12px;transform:scaleX(0.917);transform-origin:center 0;color:#000">Branch</div>
<div class="a t" style="left:-57.00px;width:300px;text-align:center;top:462.84px;font-size:12px;line-height:12px;transform:scaleX(0.917);transform-origin:center 0;color:#000">Name</div>
<div class="a t" style="left:-2.50px;width:300px;text-align:center;top:461.84px;font-size:12px;line-height:12px;transform:scaleX(0.917);transform-origin:center 0;color:#000">Object</div>
<div class="a t" style="left:-2.50px;width:300px;text-align:center;top:474.84px;font-size:12px;line-height:12px;transform:scaleX(0.917);transform-origin:center 0;color:#000">Defined</div>
<div class="a t" style="left:57.50px;width:300px;text-align:center;top:461.84px;font-size:12px;line-height:12px;transform:scaleX(0.917);transform-origin:center 0;color:#000">Inlet</div>
<div class="a t" style="left:57.50px;width:300px;text-align:center;top:474.84px;font-size:12px;line-height:12px;transform:scaleX(0.917);transform-origin:center 0;color:#000">Elevation</div>
<div class="a t" style="left:121.50px;width:300px;text-align:center;top:461.84px;font-size:12px;line-height:12px;transform:scaleX(0.917);transform-origin:center 0;color:#000">Elevation</div>
<div class="a t" style="left:121.50px;width:300px;text-align:center;top:474.84px;font-size:12px;line-height:12px;transform:scaleX(0.917);transform-origin:center 0;color:#000">Units</div>
<div class="a t" style="left:199.50px;width:300px;text-align:center;top:462.84px;font-size:12px;line-height:12px;transform:scaleX(0.917);transform-origin:center 0;color:#000">Initial Pressure</div>
<div class="a t" style="left:291.50px;width:300px;text-align:center;top:461.84px;font-size:12px;line-height:12px;transform:scaleX(0.917);transform-origin:center 0;color:#000">Initial Pressure</div>
<div class="a t" style="left:291.50px;width:300px;text-align:center;top:474.84px;font-size:12px;line-height:12px;transform:scaleX(0.917);transform-origin:center 0;color:#000">Units</div>
<div class="a t" style="left:364.00px;width:300px;text-align:center;top:461.84px;font-size:12px;line-height:12px;transform:scaleX(0.917);transform-origin:center 0;color:#000">Library</div>
<div class="a t" style="left:364.00px;width:300px;text-align:center;top:474.84px;font-size:12px;line-height:12px;transform:scaleX(0.917);transform-origin:center 0;color:#000">Source</div>
<div class="a t" style="left:423.00px;width:300px;text-align:center;top:461.84px;font-size:12px;line-height:12px;transform:scaleX(0.917);transform-origin:center 0;color:#000">Special</div>
<div class="a t" style="left:423.00px;width:300px;text-align:center;top:474.84px;font-size:12px;line-height:12px;transform:scaleX(0.917);transform-origin:center 0;color:#000">Condition</div>
<div class="a t" style="left:502.00px;width:300px;text-align:center;top:461.84px;font-size:12px;line-height:12px;transform:scaleX(0.917);transform-origin:center 0;color:#000">Boundary Flow</div>
<div class="a t" style="left:502.00px;width:300px;text-align:center;top:474.84px;font-size:12px;line-height:12px;transform:scaleX(0.917);transform-origin:center 0;color:#000">(+ = in/- = out)</div>
<div class="a t" style="left:595.00px;width:300px;text-align:center;top:461.84px;font-size:12px;line-height:12px;transform:scaleX(0.917);transform-origin:center 0;color:#000">Boundary Flow</div>
<div class="a t" style="left:595.00px;width:300px;text-align:center;top:474.84px;font-size:12px;line-height:12px;transform:scaleX(0.917);transform-origin:center 0;color:#000">Units</div>
<div class="a t" style="left:805px;top:461.84px;font-size:12px;line-height:12px;transform:scaleX(0.917);transform-origin:left 0;color:#000">(Pipe</div>
<div class="a t" style="left:800.5px;top:474.84px;font-size:12px;line-height:12px;transform:scaleX(0.917);transform-origin:left 0;color:#000">K In, K</div>
<div class="a" style="left:13px;top:494px;width:53px;height:19px;background:#f0f0f0;border-left:1px solid #a0a0a0"></div>
<div class="a" style="left:65px;top:494px;width:1px;height:18px;background:#fdfdfd"></div>
<div class="a" style="left:13px;top:512px;width:53px;height:1px;background:#a0a0a0"></div>
<div class="a" style="left:67px;top:494px;width:764px;height:19px;background:#fff"></div>
<div class="a" style="left:67px;top:512px;width:764px;height:1px;background:#f0f0f0"></div>
<div class="a" style="left:119px;top:494px;width:1px;height:19px;background:#f0f0f0"></div>
<div class="a" style="left:175px;top:494px;width:1px;height:19px;background:#f0f0f0"></div>
<div class="a" style="left:239px;top:494px;width:1px;height:19px;background:#f0f0f0"></div>
<div class="a" style="left:303px;top:494px;width:1px;height:19px;background:#f0f0f0"></div>
<div class="a" style="left:395px;top:494px;width:1px;height:19px;background:#f0f0f0"></div>
<div class="a" style="left:487px;top:494px;width:1px;height:19px;background:#f0f0f0"></div>
<div class="a" style="left:540px;top:494px;width:1px;height:19px;background:#f0f0f0"></div>
<div class="a" style="left:605px;top:494px;width:1px;height:19px;background:#f0f0f0"></div>
<div class="a" style="left:698px;top:494px;width:1px;height:19px;background:#f0f0f0"></div>
<div class="a" style="left:791px;top:494px;width:1px;height:19px;background:#f0f0f0"></div>
<div class="a" style="left:66px;top:494px;width:1px;height:19px;background:#000"></div>
<div class="a t" style="left:-110.00px;width:300px;text-align:center;top:498.84px;font-size:12px;line-height:12px;transform:scaleX(0.917);transform-origin:center 0;">3</div>
<div class="a t" style="left:70px;top:498.84px;font-size:12px;line-height:12px;transform:scaleX(0.917);transform-origin:left 0;">Branch</div>
<div class="a t" style="left:-2.50px;width:300px;text-align:center;top:498.84px;font-size:12px;line-height:12px;transform:scaleX(0.917);transform-origin:center 0;">Yes</div>
<div class="a t" style="left:-63px;width:300px;text-align:right;top:498.84px;font-size:12px;line-height:12px;transform:scaleX(0.917);transform-origin:right 0;">0</div>
<div class="a t" style="left:243px;top:498.84px;font-size:12px;line-height:12px;transform:scaleX(0.917);transform-origin:left 0;">meters</div>
<div class="a t" style="left:423.00px;width:300px;text-align:center;top:498.84px;font-size:12px;line-height:12px;transform:scaleX(0.917);transform-origin:center 0;">N/A</div>
<div class="a t" style="left:795px;top:498.84px;font-size:12px;line-height:12px;transform:scaleX(0.917);transform-origin:left 0;">(P1) 0,</div>
</div>
<div class="a" style="left:13px;top:513px;width:818px;height:1px;background:#6f6f6f"></div>
<div class="a" style="left:13px;top:514px;width:818px;height:56px;background:#ababab"></div>
<div class="a" style="left:13px;top:570px;width:818px;height:1px;background:#fafafa"></div>
<div class="a" style="left:13px;top:571px;width:1px;height:16px;background:#a0a0a0"></div>
<div class="a" style="left:14px;top:571px;width:817px;height:16px;background:#f0f0f0"></div>
<div class="a" style="left:31px;top:571px;width:248px;height:15px;background:#cdcdcd"></div>
<svg style="left:14px;top:571px" width="817" height="16" viewBox="0 0 817 16">
<path d="M10.5 4.5 L7 8 L10.5 11.5" stroke="#606060" stroke-width="2.2" fill="none"/>
<path d="M807 4.5 L810.5 8 L807 11.5" stroke="#606060" stroke-width="2.2" fill="none"/>
</svg>
<div class="a" style="left:2px;top:597px;width:841px;height:29px;background:linear-gradient(#dedfe4,#c9cad1);border-top:1px solid #a3a4a8;border-bottom:1px solid #9c9fa8;border-right:1px solid #9a9ca8;border-left:1px solid #d8d9de"></div>
<div class="a t" style="left:13px;top:606.84px;font-size:12px;line-height:12px;transform:scaleX(0.926);transform-origin:left 0;color:#1a1a1a">Base Scenario</div>
<div class="a" style="left:569px;top:603px;width:1px;height:18px;background:#b4b6bc;box-shadow:1px 0 0 #f4f4f6"></div>
<div class="a" style="left:637px;top:603px;width:1px;height:18px;background:#b4b6bc;box-shadow:1px 0 0 #f4f4f6"></div>
<svg style="left:577px;top:603px" width="17" height="17" viewBox="0 0 17 17">
<path d="M9.5 10.5 L14.5 15.5" stroke="#5d6672" stroke-width="2.6" stroke-linecap="round"/>
<circle cx="6.5" cy="6.5" r="5.3" fill="#a9cdf0" stroke="#6a7f99" stroke-width="1.2"/>
<path d="M3 5 Q5 2.5 9 3 L6.5 6.5 Z" fill="#eef6fd"/>
</svg>
<div class="a t" style="left:598.5px;top:606.84px;font-size:12px;line-height:12px;letter-spacing:-0.3px;color:#1a1a1a">100%</div>
<svg style="left:644px;top:603px" width="16" height="16" viewBox="0 0 16 16">
<circle cx="8" cy="8" r="6.6" fill="#f4f4f6" stroke="#7d8088" stroke-width="1.2"/>
<path d="M4.5 8 h7" stroke="#5a5e66" stroke-width="2"/>
</svg>
<svg style="left:820px;top:603px" width="16" height="16" viewBox="0 0 16 16">
<circle cx="8" cy="8" r="6.6" fill="#f4f4f6" stroke="#7d8088" stroke-width="1.2"/>
<path d="M4.5 8 h7 M8 4.5 v7" stroke="#5a5e66" stroke-width="2"/>
</svg>
<div class="a" style="left:663px;top:611px;width:150px;height:1px;background:linear-gradient(to right,rgba(160,140,180,0.2),#a8a4b4 20%,#a8aab2 80%,rgba(168,170,178,0.2))"></div>
<div class="a" style="left:663px;top:612px;width:150px;height:1px;background:#eeeff2"></div>
<div class="a" style="left:739px;top:605px;width:1px;height:12px;background:#a8aab2"></div>
<svg style="left:679px;top:603px" width="13" height="20" viewBox="0 0 13 20">
<defs><linearGradient id="th" x1="0" y1="0" x2="0" y2="1"><stop offset="0" stop-color="#ffffff"/><stop offset="1" stop-color="#d4dcf4"/></linearGradient></defs>
<path d="M1.5 1.5 h10 v12 l-5 5 l-5 -5 z" fill="url(#th)" stroke="#8a8e9a" stroke-width="1"/>
</svg>
</body></html>
